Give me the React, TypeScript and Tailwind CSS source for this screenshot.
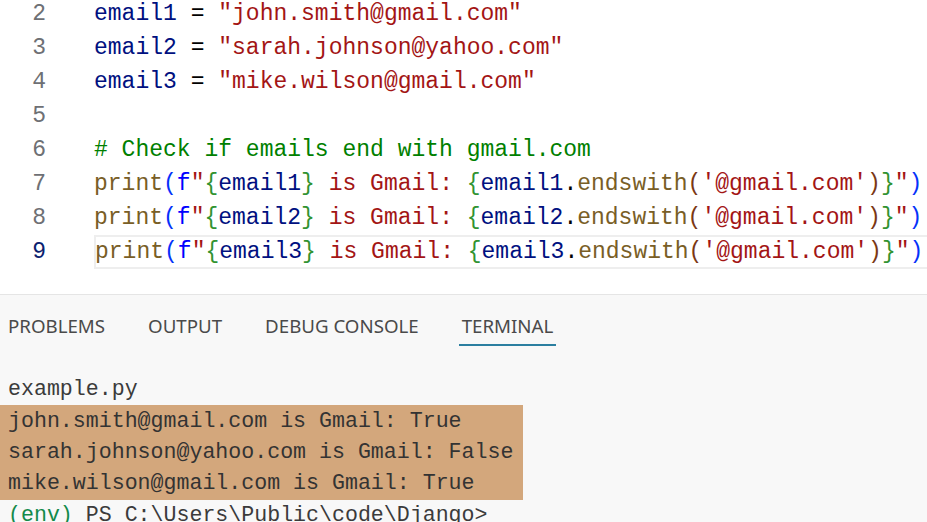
import React from "react";

const C = {
  v: "text-[#001080]",
  s: "text-[#a31515]",
  k: "text-[#000000]",
  fn: "text-[#795e26]",
  b1: "text-[#0431fa]",
  b2: "text-[#319331]",
  b3: "text-[#7b3814]",
  f: "text-[#0000ff]",
  cm: "text-[#008000]",
};

type Tok = [string, string];

const printLine = (n: string): Tok[] => [
  ["print", C.fn],
  ["(", C.b1],
  ["f", C.f],
  ['"', C.s],
  ["{", C.b2],
  [`email${n}`, C.v],
  ["}", C.b2],
  [" is Gmail: ", C.s],
  ["{", C.b2],
  [`email${n}`, C.v],
  [".", C.k],
  ["endswith", C.fn],
  ["(", C.b3],
  ["'@gmail.com'", C.s],
  [")", C.b3],
  ["}", C.b2],
  ['"', C.s],
  [")", C.b1],
];

const lines: { n: number; toks: Tok[] }[] = [
  { n: 2, toks: [["email1", C.v], [" = ", C.k], ['"john.smith@gmail.com"', C.s]] },
  { n: 3, toks: [["email2", C.v], [" = ", C.k], ['"sarah.johnson@yahoo.com"', C.s]] },
  { n: 4, toks: [["email3", C.v], [" = ", C.k], ['"mike.wilson@gmail.com"', C.s]] },
  { n: 5, toks: [] },
  { n: 6, toks: [["# Check if emails end with gmail.com", C.cm]] },
  { n: 7, toks: printLine("1") },
  { n: 8, toks: printLine("2") },
  { n: 9, toks: printLine("3") },
];

export default function App() {
  return (
    <div className="w-[927px] h-[522px] overflow-hidden bg-white flex flex-col">
      {/* Editor */}
      <div
        className="h-[297px] shrink-0 bg-white flex flex-col mt-[-3px] text-[23px] whitespace-pre"
        style={{ fontFamily: '"Liberation Mono", monospace' }}
      >
        {lines.map((l) => (
          <div key={l.n} className="flex h-[34px] items-center leading-[34px] shrink-0">
            <div
              className={`w-[46px] text-right ${l.n === 9 ? "text-[#0b216f]" : "text-[#6e7074]"}`}
            >
              {l.n}
            </div>
            <div
              className={`ml-[48px] flex-1 flex items-center h-[34px] ${
                l.n === 9 ? "border-y-2 border-l-2 border-[#eeeeee]" : ""
              }`}
            >
              <span className={l.n === 9 ? "ml-[-1px]" : ""}>
                {l.toks.map((t, i) => (
                  <span key={i} className={t[1]}>
                    {t[0]}
                  </span>
                ))}
              </span>
            </div>
          </div>
        ))}
      </div>
      {/* Panel */}
      <div className="flex-1 bg-[#f8f8f8] border-t border-[#e5e5e5] flex flex-col">
        <div
          className="flex items-start h-[54px] pt-[20px] pl-[8px] text-[18.7px] text-[#4a4a4a] gap-[43px]"
          style={{ fontFamily: '"Noto Sans", "Open Sans", sans-serif' }}
        >
          <span className="leading-[22px]">PROBLEMS</span>
          <span className="leading-[22px]">OUTPUT</span>
          <span className="leading-[22px]">DEBUG CONSOLE</span>
          <span className="relative leading-[22px]">
            TERMINAL
            <span className="absolute left-[-3px] right-[-3px] top-[29px] h-[1.5px] bg-[#2b7fa0]" />
          </span>
        </div>
        <div
          className="flex flex-col pt-[25px] text-[21.6px] leading-[31px] text-[#3b3b3b] whitespace-pre"
          style={{ fontFamily: '"Liberation Mono", monospace' }}
        >
          <div className="pl-[8px]">example.py</div>
          <div className="w-[523px] bg-[#d3a77c] pl-[8px] py-[1px] text-[#333333]">
            <div>john.smith@gmail.com is Gmail: True</div>
            <div>sarah.johnson@yahoo.com is Gmail: False</div>
            <div>mike.wilson@gmail.com is Gmail: True</div>
          </div>
          <div className="pl-[8px]">
            <span className="text-[#138a4a]">(env)</span> PS C:\Users\Public\code\Django&gt;
          </div>
        </div>
      </div>
    </div>
  );
}
